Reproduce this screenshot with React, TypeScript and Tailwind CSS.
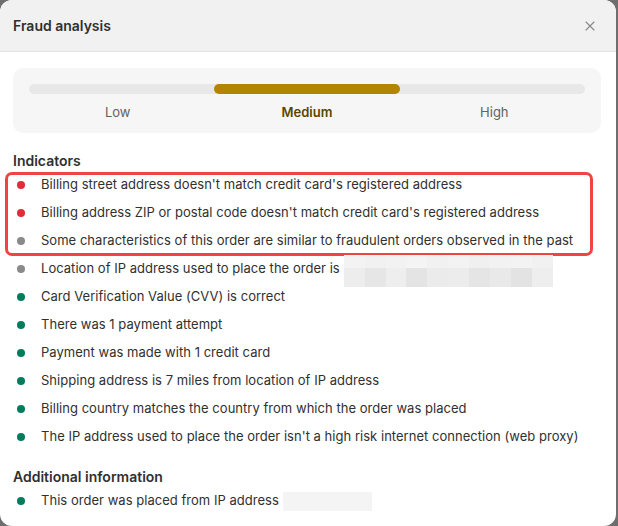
import { X } from "lucide-react";

type Tone = "critical" | "neutral" | "success";

const dotColor: Record<Tone, string> = {
  critical: "bg-[#e22c38]",
  neutral: "bg-[#8a8a8a]",
  success: "bg-[#047b5d]",
};

const flagged: { tone: Tone; text: string }[] = [
  { tone: "critical", text: "Billing street address doesn't match credit card's registered address" },
  { tone: "critical", text: "Billing address ZIP or postal code doesn't match credit card's registered address" },
  { tone: "neutral", text: "Some characteristics of this order are similar to fraudulent orders observed in the past" },
];

const passed: { tone: Tone; text: string }[] = [
  { tone: "success", text: "Card Verification Value (CVV) is correct" },
  { tone: "success", text: "There was 1 payment attempt" },
  { tone: "success", text: "Payment was made with 1 credit card" },
  { tone: "success", text: "Shipping address is 7 miles from location of IP address" },
  { tone: "success", text: "Billing country matches the country from which the order was placed" },
  { tone: "success", text: "The IP address used to place the order isn't a high risk internet connection (web proxy)" },
];

// pixelated redaction over the IP location
const topCells = ["bg-[#f3f3f3]", "bg-[#f1f1f1]", "bg-[#f2f2f2]", "bg-[#f4f4f4]", "bg-[#f1f1f1]", "bg-[#f3f3f3]", "bg-[#f0f0f0]", "bg-[#f2f2f2]", "bg-[#f3f3f3]", "bg-[#f1f1f1]"];
const bottomCells = ["bg-[#ededed]", "bg-[#e6e6e6]", "bg-[#eeeeee]", "bg-[#e4e4e4]", "bg-[#ebebeb]", "bg-[#ececec]", "bg-[#e5e5e5]", "bg-[#e9e9e9]", "bg-[#e3e3e3]", "bg-[#eeeeee]"];

function Row({ tone, children }: { tone: Tone; children: React.ReactNode }) {
  return (
    <li className="flex h-[20px] items-center">
      <span className={`ml-[4px] h-[8px] w-[8px] shrink-0 rounded-full ${dotColor[tone]}`} />
      <span className="ml-[16px] whitespace-nowrap text-[13px] tracking-[0.03px] text-[#303030]">{children}</span>
    </li>
  );
}

export default function App() {
  return (
    <div className="h-[526px] w-[618px] overflow-hidden bg-[#6e6e6e] font-['Inter',sans-serif]">
      <div className="h-[526px] w-[616px] overflow-hidden rounded-[12px] bg-white">
        <div className="flex h-[52px] items-center justify-between border-b border-[#e3e3e3] bg-[#f1f1f1] pl-[13px] pr-[18px]">
          <h2 className="text-[14px] font-semibold text-[#303030]">Fraud analysis</h2>
          <X size={16} strokeWidth={1.75} className="text-[#8a8a8a]" />
        </div>

        <div className="px-[13px] pt-[16px]">
          <div className="h-[65px] w-[588px] rounded-[10px] bg-[#f6f6f6] px-[16px] pt-[16px]">
            <div className="grid h-[10px] grid-cols-3 rounded-full bg-[#e8e8e8]">
              <div />
              <div className="rounded-full bg-[#b28400]" />
              <div />
            </div>
            <div className="mt-[10px] grid grid-cols-3 text-center text-[13px] leading-[16px]">
              <span className="pr-[8px] text-[#616161]">Low</span>
              <span className="font-semibold text-[#574800]">Medium</span>
              <span className="pl-[4px] text-[#616161]">High</span>
            </div>
          </div>

          <h3 className="mt-[18px] text-[14px] font-semibold leading-[20px] text-[#303030]">Indicators</h3>

          <div className="-mx-[8px] mt-[1px] w-[588px] rounded-[7px] border-[3px] border-[#ef4444] px-[5px] pb-[2px]">
            <ul className="flex flex-col gap-[8px]">
              {flagged.map((item) => (
                <Row key={item.text} tone={item.tone}>
                  {item.text}
                </Row>
              ))}
            </ul>
          </div>

          <ul className="mt-[3px] flex flex-col gap-[8px]">
            <li className="flex h-[20px] items-center">
              <span className="ml-[4px] h-[8px] w-[8px] shrink-0 rounded-full bg-[#8a8a8a]" />
              <span className="ml-[16px] whitespace-nowrap text-[13px] tracking-[0.03px] text-[#303030]">
                Location of IP address used to place the order is
              </span>
              <div className="relative top-[2px] ml-[4px] flex h-[32px] w-[209px] shrink-0 flex-col">
                <div className="grid h-[13px] grid-cols-10">
                  {topCells.map((c, i) => (
                    <div key={i} className={c} />
                  ))}
                </div>
                <div className="grid h-[19px] grid-cols-10">
                  {bottomCells.map((c, i) => (
                    <div key={i} className={c} />
                  ))}
                </div>
              </div>
            </li>
            {passed.map((item) => (
              <Row key={item.text} tone={item.tone}>
                {item.text}
              </Row>
            ))}
          </ul>

          <h3 className="mt-[20px] text-[14px] font-semibold leading-[20px] text-[#303030]">
            Additional information
          </h3>
          <ul className="mt-[4px]">
            <li className="flex h-[20px] items-center">
              <span className="ml-[4px] h-[8px] w-[8px] shrink-0 rounded-full bg-[#047b5d]" />
              <span className="ml-[16px] whitespace-nowrap text-[13px] tracking-[0.03px] text-[#303030]">
                This order was placed from IP address
              </span>
              <div className="ml-[4px] h-[19px] w-[89px] shrink-0 bg-[#f4f4f4]" />
            </li>
          </ul>
        </div>
      </div>
    </div>
  );
}
